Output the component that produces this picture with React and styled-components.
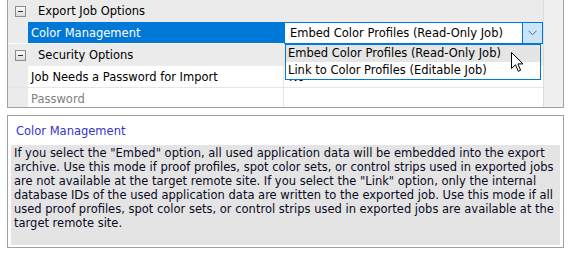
import React from "react";
import styled, { createGlobalStyle } from "styled-components";

const Global = createGlobalStyle`
  html, body { margin: 0; padding: 0; background: #ffffff; }
  body { font-family: "DejaVu Sans", Verdana, sans-serif; font-size: 11.5px; color: #000; }
`;

const Page = styled.div`
  position: relative;
  width: 571px;
  height: 254px;
  padding-left: 7px;
  box-sizing: border-box;
`;

const GridPanel = styled.div`
  width: 557px;
  height: 108px;
  box-sizing: border-box;
  border: 1px solid #a0a0a0;
  border-top: none;
  display: flex;
  overflow: hidden;
`;

const Grid = styled.div`
  width: 535px;
  display: flex;
  flex-direction: column;
`;

const ScrollTrack = styled.div`
  flex: 1;
  background: #f0f0f0;
  border-left: 1px solid #dcdcdc;
`;

const CategoryRow = styled.div`
  height: 22px;
  flex: none;
  display: flex;
  align-items: center;
  background: #ebebeb;
  padding-left: 7px;
  gap: 12px;
  box-sizing: border-box;
`;

const PropRow = styled.div`
  height: 22px;
  flex: none;
  display: flex;
  box-sizing: border-box;
  border-bottom: 1px solid ${(p) => (p.$last ? "transparent" : "#e6e6e6")};
`;

const Gutter = styled.div`
  width: 20px;
  flex: none;
  background: #ebebeb;
`;

const NameCell = styled.div`
  width: 256px;
  flex: none;
  display: flex;
  align-items: center;
  padding-left: 3px;
  box-sizing: border-box;
  white-space: nowrap;
  background: ${(p) => (p.$selected ? "#0078d7" : "#ffffff")};
  color: ${(p) => (p.$selected ? "#ffffff" : p.$muted ? "#808080" : "#000")};
  border-right: 1px solid ${(p) => (p.$selected ? "#0078d7" : "#e6e6e6")};
`;

const ValueCell = styled.div`
  flex: 1;
  display: flex;
  align-items: center;
  padding-left: 5px;
  background: #fff;
`;

const SelectBox = styled.div`
  flex: 1;
  height: 22px;
  box-sizing: border-box;
  border: 1px solid #0078d7;
  display: flex;
  align-items: center;
  background: #fff;
`;

const SelectText = styled.div`
  flex: 1;
  padding-left: 5px;
  color: #000;
  white-space: nowrap;
`;

const SelectButton = styled.div`
  width: 19px;
  height: 100%;
  background: #cce4f7;
  border-left: 1px solid #0078d7;
  display: flex;
  align-items: center;
  justify-content: center;
`;

const DropList = styled.div`
  position: absolute;
  left: 285px;
  top: 44px;
  width: 256px;
  box-sizing: border-box;
  border: 1px solid #0078d7;
  background: #fff;
  display: flex;
  flex-direction: column;
`;

const DropItem = styled.div`
  height: 17px;
  line-height: 17px;
  padding-left: 2px;
  white-space: nowrap;
  background: ${(p) => (p.$hover ? "#e5e5e5" : "#fff")};
  color: #000;
`;

const Cursor = styled.svg`
  position: absolute;
  left: 511px;
  top: 52px;
`;

const InfoPanel = styled.div`
  margin-top: 7px;
  width: 557px;
  height: 133px;
  box-sizing: border-box;
  border: 1px solid #a0a0a0;
  padding: 7px 3px 0 3px;
  display: flex;
  flex-direction: column;
`;

const InfoTitle = styled.div`
  height: 22px;
  padding-left: 5px;
  color: #3434c8;
  line-height: 17px;
`;

const InfoBody = styled.div`
  height: 100px;
  background: #e4e4e4;
  padding: 1px 3px 0 3px;
  line-height: 14px;
  color: #0a0a1e;
  box-sizing: border-box;
`;

const InfoLine = styled.div`
  white-space: nowrap;
`;

const MinusIcon = () => (
  <svg width="11" height="11" viewBox="0 0 11 11">
    <defs>
      <linearGradient id="mg" x1="0" y1="0" x2="0" y2="1">
        <stop offset="0" stopColor="#fdfdfd" />
        <stop offset="1" stopColor="#d8d8d8" />
      </linearGradient>
    </defs>
    <rect x="0.5" y="0.5" width="10" height="10" fill="url(#mg)" stroke="#8c8c8c" />
    <rect x="3" y="5" width="5" height="1" fill="#333" />
  </svg>
);

const Chevron = () => (
  <svg width="9" height="6" viewBox="0 0 9 6">
    <path d="M0.5 0.8 L4.5 4.8 L8.5 0.8" fill="none" stroke="#4a6c8c" strokeWidth="1" />
  </svg>
);

const infoLines = [
  'If you select the "Embed" option, all used application data will be embedded into the export',
  "archive. Use this mode if proof profiles, spot color sets, or control strips used in exported jobs",
  'are not available at the target remote site. If you select the "Link" option, only the internal',
  "database IDs of the used application data are written to the exported job. Use this mode if all",
  "used proof profiles, spot color sets, or control strips used in exported jobs are available at the",
  "target remote site.",
];

export default function App() {
  return (
    <Page>
      <Global />
      <GridPanel>
        <Grid>
          <CategoryRow>
            <MinusIcon />
            <span>Export Job Options</span>
          </CategoryRow>
          <PropRow $last>
            <Gutter />
            <NameCell $selected>Color Management</NameCell>
            <SelectBox>
              <SelectText>Embed Color Profiles (Read-Only Job)</SelectText>
              <SelectButton>
                <Chevron />
              </SelectButton>
            </SelectBox>
          </PropRow>
          <CategoryRow>
            <MinusIcon />
            <span>Security Options</span>
          </CategoryRow>
          <PropRow>
            <Gutter />
            <NameCell>Job Needs a Password for Import</NameCell>
            <ValueCell>No</ValueCell>
          </PropRow>
          <PropRow $last>
            <Gutter />
            <NameCell $muted>Password</NameCell>
            <ValueCell />
          </PropRow>
        </Grid>
        <ScrollTrack />
      </GridPanel>
      <InfoPanel>
        <InfoTitle>Color Management</InfoTitle>
        <InfoBody>
          {infoLines.map((l) => (
            <InfoLine key={l}>{l}</InfoLine>
          ))}
        </InfoBody>
      </InfoPanel>
      <DropList>
        <DropItem $hover>Embed Color Profiles (Read-Only Job)</DropItem>
        <DropItem>Link to Color Profiles (Editable Job)</DropItem>
      </DropList>
      <Cursor width="13" height="21" viewBox="0 0 13 21">
        <path
          d="M0.5 0.5 L0.5 16.5 L4.5 12.8 L7.3 19.3 L9.6 18.3 L6.9 11.9 L12 11.9 Z"
          fill="#fff"
          stroke="#000"
          strokeWidth="1"
          strokeLinejoin="miter"
        />
      </Cursor>
    </Page>
  );
}
